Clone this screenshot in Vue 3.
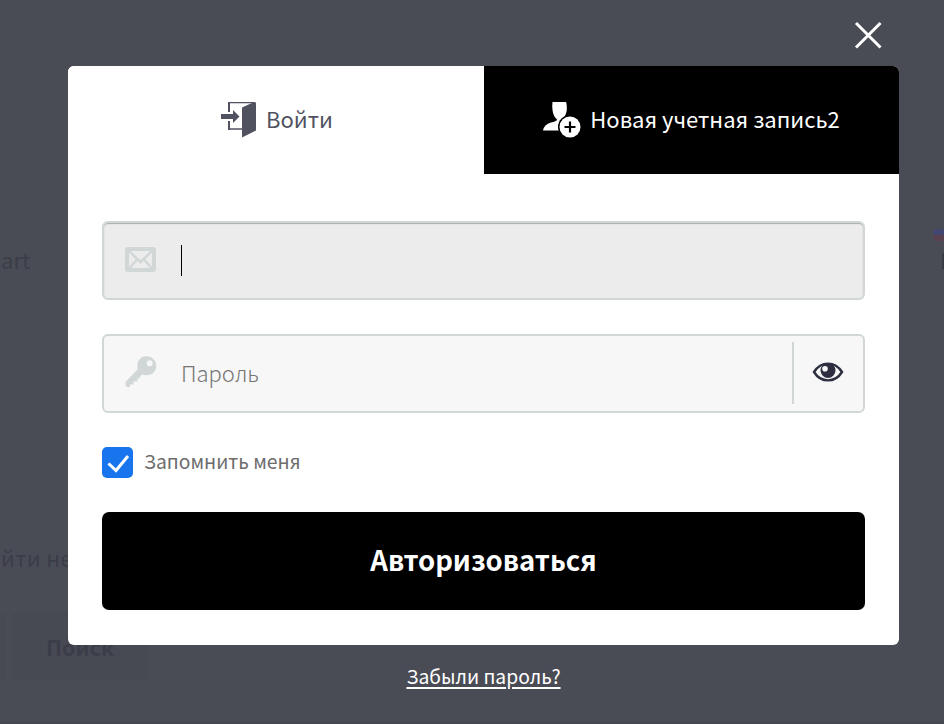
<script setup>
import { ref, onMounted } from 'vue'

const tab = ref('login')
const email = ref('')
const password = ref('')
const remember = ref(true)
const showPassword = ref(false)
const emailInput = ref(null)

onMounted(() => {
    emailInput.value.focus()
})
</script>

<template>
    <div class="screen">
        <!-- page under the overlay -->
        <div class="page">
            <div class="page-top">
                <span class="page-brand">art</span>
                <div class="page-lang">
                    <i class="flag"></i>
                    <i class="lang-mark"></i>
                </div>
            </div>
            <div class="page-hint">йти не</div>
            <div class="page-search">
                <span class="search-field"></span>
                <span class="search-button">Поиск</span>
            </div>
        </div>

        <div class="overlay">
            <div class="close-row">
                <button class="close" type="button" aria-label="Закрыть">
                    <svg width="28" height="28" viewBox="0 0 28 28">
                        <path d="M2 2 26.500 26.500M26.500 2 2 26.500" fill="none" stroke="#fff" stroke-width="3" />
                    </svg>
                </button>
            </div>

            <div class="modal">
                <div class="tabs">
                    <button class="tab" :class="{ 'is-active': tab === 'login' }" type="button" @click="tab = 'login'">
                        <svg class="door" width="36" height="36" viewBox="0 0 36 36">
                            <path d="M8 10V0M8 19V28" fill="none" stroke="currentColor" stroke-width="2" />
                            <path d="M7 .5H34M7 27H22" fill="none" stroke="currentColor" stroke-width="1.600" />
                            <path d="M21 5.500 32 0.500H35V28.500L21 35.500Z" fill="currentColor" />
                            <path d="M0 12H12V8L18.500 14.500 12 21V17H0Z" fill="currentColor" />
                        </svg>
                        <span class="tab-text">Войти</span>
                    </button>
                    <button class="tab" :class="{ 'is-active': tab === 'signup' }" type="button" @click="tab = 'signup'">
                        <svg class="person" width="38" height="36" viewBox="0 0 38 36">
                            <path d="M9.500 0H23Q24 2 23.800 8 23 14 19.500 17V20H14.500V18Q10 14 9.500 8Q9 3 9.500 0Z" fill="currentColor" />
                            <path d="M0 28.500Q1 22.500 8 20.500 13 19.500 14.500 17.500H20V28.500Z" fill="currentColor" />
                            <circle cx="27" cy="25" r="12" fill="#000" />
                            <circle cx="27" cy="25" r="10.500" fill="currentColor" />
                            <path d="M21.500 25H32.500M27 19.500V30.500" stroke="#000" stroke-width="2.200" />
                        </svg>
                        <span class="tab-text">Новая учетная запись2</span>
                    </button>
                </div>

                <form class="form" @submit.prevent>
                    <label class="field is-focused">
                        <svg class="field-icon" width="31" height="25" viewBox="0 0 31 25">
                            <rect x="2" y="2" width="27" height="21" rx="1" fill="none" stroke="#d1d7d7" stroke-width="4" />
                            <path d="M4 4 15.500 15 27 4M4 21.500 12 12.500M27 21.500 19 12.500" fill="none" stroke="#d1d7d7" stroke-width="2.400" />
                            <path d="M10 9.500 15.500 13 21 9.500 15.500 17Z" fill="#d1d7d7" />
                        </svg>
                        <span v-if="!email" class="caret"></span>
                        <input ref="emailInput" v-model="email" type="email" />
                    </label>

                    <div class="field">
                        <svg class="field-icon key" width="32" height="32" viewBox="0 0 32 32">
                            <path fill="#d1d7d7" fill-rule="evenodd" d="M17 1Q21.500-.5 26 1 31 4 31.300 10 31 16 26 18.500 21 20 17 18.500L14.500 21.500V22.500H12.500V25.500H8.500V28.500H5V30.500L3.500 31.500 0.500 30V26L12.500 13.500V7Q14 3 17 1ZM24.700 4.300A3 3 0 1 0 24.700 10.300 3 3 0 1 0 24.700 4.300Z" />
                        </svg>
                        <input v-model="password" class="password" :type="showPassword ? 'text' : 'password'" placeholder="Пароль" />
                        <button class="reveal" type="button" aria-label="Показать пароль" @click="showPassword = !showPassword">
                            <svg width="32" height="20" viewBox="0 0 32 20">
                                <path d="M2 10C9-1.200 23-1.200 30 10 23 21.200 9 21.200 2 10Z" fill="none" stroke="#2d2f40" stroke-width="2.400" />
                                <circle cx="16" cy="8.500" r="7.500" fill="#2d2f40" />
                                <circle cx="13" cy="6.800" r="2.800" fill="#f7f7f7" />
                            </svg>
                        </button>
                    </div>

                    <label class="remember">
                        <input v-model="remember" type="checkbox" />
                        <span class="box" :class="{ 'is-checked': remember }">
                            <svg v-if="remember" width="31" height="31" viewBox="0 0 31 31">
                                <path d="M6.500 16.500 14 23.500 26 9" fill="none" stroke="#fff" stroke-width="3" />
                            </svg>
                        </span>
                        <span class="remember-text">Запомнить меня</span>
                    </label>

                    <button class="submit" type="submit"><span>Авторизоваться</span></button>
                </form>
            </div>

            <a class="forgot" href="#">Забыли пароль?</a>
        </div>
    </div>
</template>

<style>
body {
    margin: 0;
    overflow: hidden;
}
</style>

<style scoped>
.screen {
    background: #4a4c55;
    box-sizing: border-box;
    font-family: "Noto Sans CJK SC", "Noto Sans", sans-serif;
    height: 724px;
    overflow: hidden;
    position: relative;
    width: 944px;
}

button,
input {
    background: none;
    border: 0;
    font: inherit;
    margin: 0;
    outline: 0;
    padding: 0;
}

button {
    cursor: pointer;
}

svg {
    display: block;
    flex: none;
}

/* dimmed page */
.page {
    border-bottom: 2px solid #444650;
    box-sizing: border-box;
    color: #3b3d48;
    height: 724px;
    padding-top: 227px;
}

.page-top {
    display: flex;
    height: 315px;
    justify-content: space-between;
}

.page-brand {
    font-size: 22px;
    line-height: 64px;
    padding-left: 1px;
}

.page-lang {
    align-items: flex-end;
    display: flex;
    flex-direction: column;
    width: 11px;
}

.flag {
    background: linear-gradient(#43466f 50%, #5a4150 50%);
    border-radius: 0 0 0 4px;
    height: 12px;
    margin-top: 2px;
    width: 11px;
}

.lang-mark {
    background: #393b44;
    height: 16px;
    margin-top: 12px;
    width: 2px;
}

.page-hint {
    font-size: 22px;
    letter-spacing: .3px;
    line-height: 30px;
    padding-left: 1px;
}

.page-search {
    display: flex;
    gap: 7px;
    margin-top: 41px;
}

.search-field {
    background: #484a53;
    height: 68px;
    width: 5px;
}

.search-button {
    background: #484a53;
    box-sizing: border-box;
    font-size: 21.500px;
    font-weight: 700;
    height: 68px;
    line-height: 68px;
    padding-left: 34px;
    width: 136px;
}

.overlay {
    align-items: center;
    box-sizing: border-box;
    display: flex;
    flex-direction: column;
    inset: 0;
    padding: 21px 45px 0 68px;
    position: absolute;
}

.close-row {
    box-sizing: border-box;
    display: flex;
    height: 45px;
    justify-content: flex-end;
    padding-right: 17px;
    width: 100%;
}

.close {
    height: 28px;
    width: 28px;
}

.modal {
    background: #fff;
    border-radius: 6px;
    box-sizing: border-box;
    height: 579px;
    overflow: hidden;
    width: 831px;
}

.tabs {
    display: grid;
    grid-template-columns: 416px 415px;
    height: 108px;
}

.tab {
    align-items: center;
    background: #000;
    color: #fff;
    display: flex;
    font-size: 22px;
    justify-content: center;
    line-height: 32px;
    padding-bottom: 2px;
    white-space: nowrap;
}

.tab.is-active {
    background: #fff;
    color: #505260;
    padding-left: 2px;
}

.tab-text {
    padding-bottom: 2px;
}

.door {
    margin: 1px 9px 0 0;
}

.person {
    margin: 1px 9px 0 0;
}

.form {
    padding: 47px 34px 0;
}

.field {
    align-items: center;
    background: #f7f7f7;
    border: 2px solid #d1d7d7;
    border-radius: 6px;
    box-sizing: border-box;
    display: flex;
    height: 79px;
    margin-bottom: 34px;
    padding-left: 21px;
}

.field.is-focused {
    background: #ececec;
    box-shadow: inset 0 1px 1px #aaa;
}

.field-icon {
    margin-right: 25px;
}

.field.is-focused .field-icon {
    margin-top: -3px;
}

.field-icon.key {
    margin: -4px 24px 0 0;
}

.caret {
    background: #000;
    height: 31px;
    width: 1px;
}

.field input {
    color: #222;
    flex: 1;
    font-size: 22px;
    min-width: 0;
}

.field .password {
    padding-bottom: 4px;
}

.field.is-focused input {
    caret-color: transparent;
}

.password::placeholder {
    color: #757575;
    font-weight: 300;
    opacity: 1;
}

.reveal {
    align-items: center;
    border-left: 2px solid #d1d7d7;
    box-sizing: border-box;
    display: flex;
    height: 62px;
    margin-top: -1px;
    padding: 0 0 2px 18px;
    width: 71px;
}

.remember {
    align-items: center;
    color: #6c6c6c;
    display: flex;
    font-size: 19.300px;
    gap: 11px;
    height: 31px;
    line-height: 31px;
}

.remember input {
    display: none;
}

.remember-text {
    padding-bottom: 2px;
}

.box {
    border: 1px solid #999;
    border-radius: 5px;
    box-sizing: border-box;
    height: 31px;
    width: 31px;
}

.box.is-checked {
    background: #1a73e8;
    background: #1975ee;
    border: 0;
}

.submit {
    background: #000;
    border-radius: 7px;
    color: #fff;
    display: block;
    font-size: 27.500px;
    font-weight: 700;
    height: 98px;
    margin-top: 34px;
    padding-bottom: 4px;
    width: 100%;
}

.forgot {
    color: #fff;
    font-size: 19.300px;
    line-height: 28px;
    margin-top: 17px;
    text-decoration: underline;
    text-decoration-thickness: 2px;
    text-underline-offset: 3px;
}
</style>
